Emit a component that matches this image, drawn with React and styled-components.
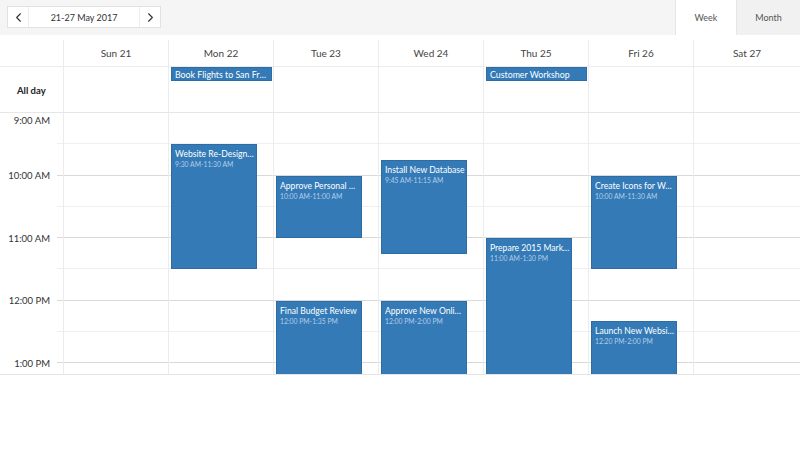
import React from 'react';
import styled, { createGlobalStyle } from 'styled-components';
import { ChevronLeft, ChevronRight } from 'lucide-react';

const DAY_START = 9 * 60;
const SLOT = 31.25;

const days = ['Sun 21', 'Mon 22', 'Tue 23', 'Wed 24', 'Thu 25', 'Fri 26', 'Sat 27'];

const allDayEvents = [
  { day: 1, title: 'Book Flights to San Francisco for Sales Trip' },
  { day: 4, title: 'Customer Workshop' }
];

const events = [
  { day: 1, title: 'Website Re-Design Plan', start: 570, end: 690, time: '9:30 AM-11:30 AM' },
  { day: 2, title: 'Approve Personal Computer Upgrade Plan', start: 600, end: 660, time: '10:00 AM-11:00 AM' },
  { day: 2, title: 'Final Budget Review', start: 720, end: 815, time: '12:00 PM-1:35 PM' },
  { day: 3, title: 'Install New Database', start: 585, end: 675, time: '9:45 AM-11:15 AM' },
  { day: 3, title: 'Approve New Online Marketing Strategy', start: 720, end: 840, time: '12:00 PM-2:00 PM' },
  { day: 4, title: 'Prepare 2015 Marketing Plan', start: 660, end: 810, time: '11:00 AM-1:30 PM' },
  { day: 5, title: 'Create Icons for Website', start: 600, end: 690, time: '10:00 AM-11:30 AM' },
  { day: 5, title: 'Launch New Website', start: 740, end: 840, time: '12:20 PM-2:00 PM' }
];

// only the hours that fit in the visible part of the day view
const hours = ['9:00 AM', '10:00 AM', '11:00 AM', '12:00 PM', '1:00 PM'];
const slots = Array.from({ length: 10 }, (_, i) => i);

const GlobalStyle = createGlobalStyle`
  * { box-sizing: border-box; }
  body {
    margin: 0;
    background: #fff;
    font-family: Lato, "Open Sans", sans-serif;
    color: #333;
  }
`;

export default function App() {
  return (
    <>
      <GlobalStyle />
      <Scheduler>
        <Toolbar>
          <NavGroup>
            <NavButton aria-label="Previous">
              <ChevronLeft size={15} strokeWidth={1.8} />
            </NavButton>
            <DateLabel>21-27 May 2017</DateLabel>
            <NavButton aria-label="Next">
              <ChevronRight size={15} strokeWidth={1.8} />
            </NavButton>
          </NavGroup>
          <Tabs>
            <Tab $active>Week</Tab>
            <Tab>Month</Tab>
          </Tabs>
        </Toolbar>

        <HeaderRow>
          <Corner />
          {days.map((d) => (
            <DayHeader key={d}>{d}</DayHeader>
          ))}
        </HeaderRow>

        <AllDayRow>
          <AllDayLabel>All day</AllDayLabel>
          {days.map((d, i) => (
            <AllDayCell key={d}>
              {allDayEvents
                .filter((e) => e.day === i)
                .map((e) => (
                  <AllDayEvent key={e.title}>{e.title}</AllDayEvent>
                ))}
            </AllDayCell>
          ))}
        </AllDayRow>

        <Body>
          <TimeColumn>
            <Labels>
              {hours.map((h, i) => (
                <TimeLabel key={h} $first={i === 0}>
                  {h}
                </TimeLabel>
              ))}
            </Labels>
            <Ticks>
              {slots.map((s) => (
                <Slot key={s} $hour={s % 2 === 1} />
              ))}
            </Ticks>
          </TimeColumn>
          {days.map((d, i) => (
            <DayColumn key={d}>
              {slots.map((s) => (
                <Slot key={s} $hour={s % 2 === 1} />
              ))}
              {events
                .filter((e) => e.day === i)
                .map((e) => (
                  <Event
                    key={e.title}
                    style={{
                      top: ((e.start - DAY_START) / 30) * SLOT,
                      height: ((e.end - e.start) / 30) * SLOT
                    }}
                  >
                    <EventTitle>{e.title}</EventTitle>
                    <EventTime>{e.time}</EventTime>
                  </Event>
                ))}
            </DayColumn>
          ))}
        </Body>
      </Scheduler>
    </>
  );
}

const columns = '63px repeat(6, 105px) 1fr';

const Scheduler = styled.div`
  width: 800px;
  border-bottom: 1px solid #e4e4e4;
`;

const Toolbar = styled.div`
  display: flex;
  justify-content: space-between;
  align-items: flex-start;
  height: 35px;
  background: #f5f5f5;
`;

const NavGroup = styled.div`
  display: flex;
  margin: 6px 0 0 7px;
  height: 22px;
  background: #fff;
  border: 1px solid #e2e2e2;
`;

const NavButton = styled.button`
  display: flex;
  align-items: center;
  justify-content: center;
  width: 20px;
  padding: 0;
  border: none;
  background: #fff;
  color: #333;
  cursor: pointer;
`;

const DateLabel = styled.div`
  display: flex;
  align-items: center;
  justify-content: center;
  width: 112px;
  font-size: 9px;
  color: #333;
  border-left: 1px solid #ececec;
  border-right: 1px solid #ececec;
`;

const Tabs = styled.div`
  display: flex;
  height: 35px;
`;

const Tab = styled.div`
  display: flex;
  align-items: center;
  justify-content: center;
  width: ${(p) => (p.$active ? '61px' : '64px')};
  font-size: 9px;
  color: #555;
  background: ${(p) => (p.$active ? '#fff' : '#f1f1f1')};
  border-left: 1px solid #e6e6e6;
`;

const HeaderRow = styled.div`
  display: grid;
  grid-template-columns: ${columns};
  height: 27px;
  margin-top: 5px;
  border-bottom: 1px solid #ececec;
`;

const Corner = styled.div``;

const DayHeader = styled.div`
  display: flex;
  align-items: center;
  justify-content: center;
  font-size: 10px;
  color: #444;
  border-left: 1px solid #ececec;
`;

const AllDayRow = styled.div`
  display: grid;
  grid-template-columns: ${columns};
  height: 46px;
  border-bottom: 1px solid #e6e6e6;
`;

const AllDayLabel = styled.div`
  display: flex;
  align-items: center;
  padding: 2px 0 0 17px;
  font-size: 9.5px;
  font-weight: 700;
  color: #222;
`;

const AllDayCell = styled.div`
  padding: 0 1px 0 2px;
  border-left: 1px solid #ececec;
`;

const AllDayEvent = styled.div`
  height: 14px;
  padding: 0 3px;
  font-size: 8.8px;
  line-height: 13px;
  color: #fff;
  background: #337ab7;
  border: 1px solid #2e6da4;
  white-space: nowrap;
  overflow: hidden;
  text-overflow: ellipsis;
`;

const Body = styled.div`
  display: grid;
  grid-template-columns: ${columns};
  height: 261px;
  overflow: hidden;
`;

const TimeColumn = styled.div`
  display: flex;
`;

const Labels = styled.div`
  flex: 1;
  display: flex;
  flex-direction: column;
`;

const TimeLabel = styled.div`
  display: flex;
  align-items: ${(p) => (p.$first ? 'flex-start' : 'center')};
  justify-content: flex-end;
  flex: none;
  height: ${(p) => (p.$first ? SLOT : SLOT * 2)}px;
  padding: ${(p) => (p.$first ? '2px 7px 0 0' : '0 7px 0 0')};
  font-size: 9.5px;
  color: #333;
`;

const Ticks = styled.div`
  width: 6px;
  display: flex;
  flex-direction: column;
`;

const Slot = styled.div`
  flex: none;
  height: ${SLOT}px;
  border-bottom: 1px solid ${(p) => (p.$hour ? '#d9d9d9' : '#efefef')};
`;

const DayColumn = styled.div`
  position: relative;
  display: flex;
  flex-direction: column;
  border-left: 1px solid #ececec;
`;

const Event = styled.div`
  position: absolute;
  left: 2px;
  width: 86px;
  padding: 4px 1px 3px 3px;
  background: #337ab7;
  border: 1px solid #2e6da4;
  color: #fff;
  overflow: hidden;
`;

const EventTitle = styled.div`
  font-size: 8.6px;
  line-height: 11px;
  white-space: nowrap;
  overflow: hidden;
  text-overflow: ellipsis;
`;

const EventTime = styled.div`
  font-size: 6.8px;
  line-height: 9px;
  color: #b3cde8;
  white-space: nowrap;
`;
